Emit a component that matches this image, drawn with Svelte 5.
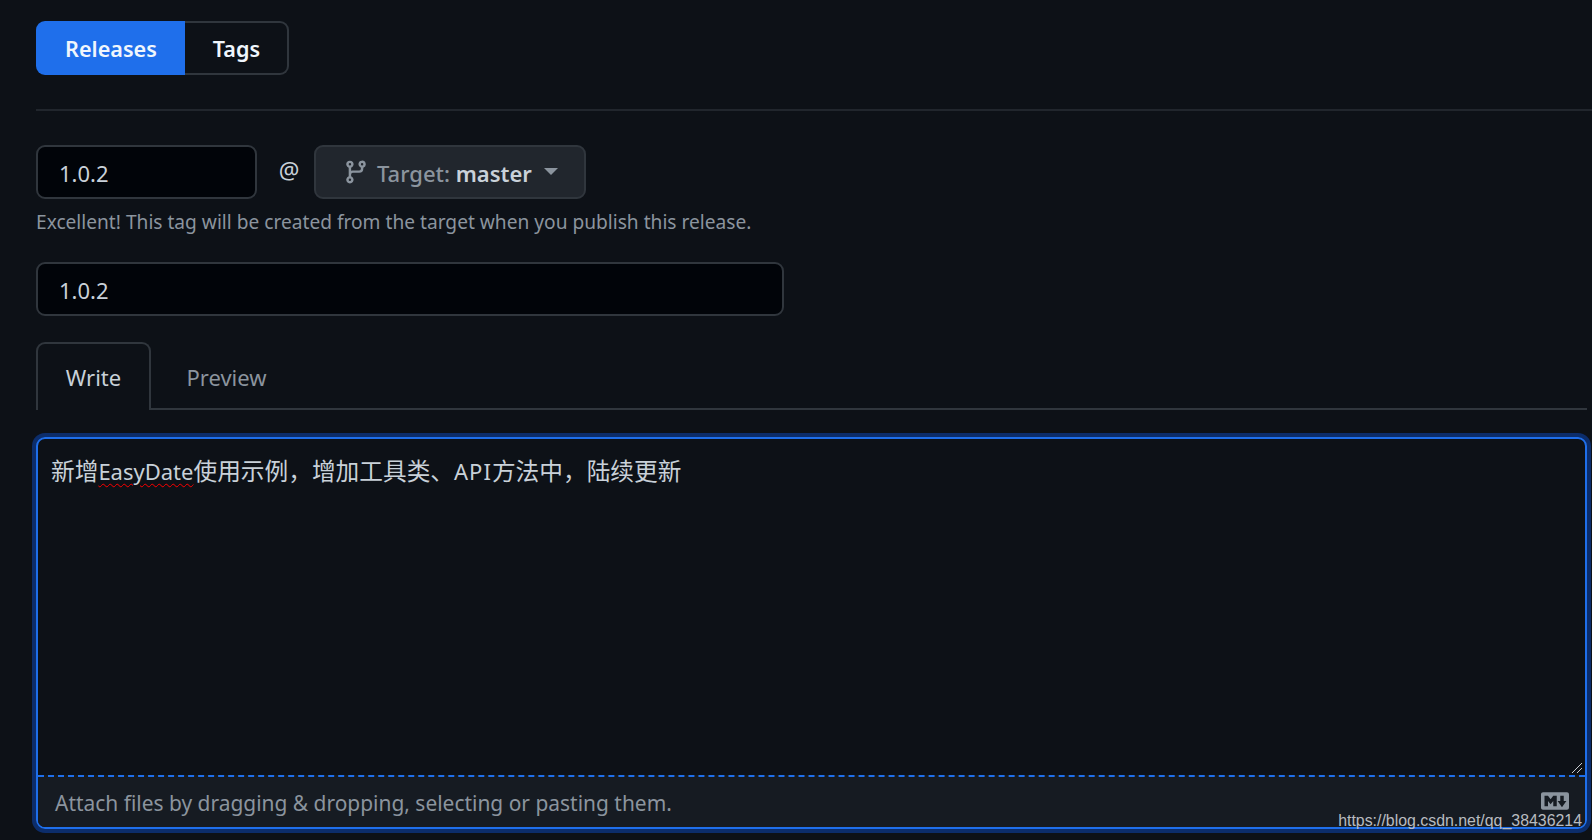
<script>
  let tagName = "1.0.2";
  let title = "1.0.2";
</script>

<div class="page">
  <div class="subnav">
    <a class="subnavItem selected" href="#releases">Releases</a>
    <a class="subnavItem" href="#tags">Tags</a>
  </div>

  <hr />

  <div class="tagRow">
    <input class="field tagField" bind:value={tagName} type="text" />
    <span class="at">@</span>
    <button class="targetBtn">
      <svg class="branch" viewBox="0 0 16 16" width="26" height="26" fill="currentColor">
        <path fill-rule="evenodd" d="M11.75 2.5a.75.75 0 100 1.5.75.75 0 000-1.5zm-2.25.75a2.25 2.25 0 113 2.122V6A2.5 2.5 0 0110 8.5H6a1 1 0 00-1 1v1.128a2.251 2.251 0 11-1.5 0V5.372a2.25 2.25 0 111.5 0v1.836A2.492 2.492 0 016 7h4a1 1 0 001-1v-.628A2.25 2.25 0 019.5 3.25zM4.25 12a.75.75 0 100 1.5.75.75 0 000-1.5zM3.5 3.25a.75.75 0 111.5 0 .75.75 0 01-1.5 0z"></path>
      </svg>
      <span class="targetLabel">Target: <b>master</b></span>
      <span class="caret"></span>
    </button>
  </div>
  <p class="note">Excellent! This tag will be created from the target when you publish this release.</p>

  <input class="field titleField" bind:value={title} type="text" />

  <div class="tabs">
    <div class="tab active">Write</div>
    <div class="tab">Preview</div>
  </div>

  <div class="editor">
    <div class="body">
      新增<span class="latin misspelled">EasyDate</span>使用示例，增加工具类、<span class="latin api">API</span>方法中，陆续更新
      <svg class="grip" viewBox="0 0 12 12" width="12" height="12">
        <path d="M11 1 1 11M11 6 6 11" stroke="#c8ccd0" stroke-width="1" fill="none"></path>
      </svg>
    </div>
    <div class="attach">
      <span>Attach files by dragging &amp; dropping, selecting or pasting them.</span>
      <svg class="md" viewBox="0 0 16 16" width="28" height="28" fill="currentColor">
        <path fill-rule="evenodd" d="M14.85 3H1.15C.52 3 0 3.52 0 4.15v7.69C0 12.48.52 13 1.15 13h13.69c.64 0 1.15-.52 1.15-1.15v-7.7C16 3.52 15.48 3 14.85 3zM9 11H7V8L5.5 9.92 4 8v3H2V5h2l1.5 2L7 5h2v6zm2.99.5L9.5 8H11V5h2v3h1.5l-2.51 3.5z"></path>
      </svg>
    </div>
  </div>

  <div class="watermark">https://blog.csdn.net/qq_38436214</div>
</div>

<style>
  :global(body) {
    background: #0d1117;
    overflow: hidden;
  }

  .page {
    position: relative;
    height: 840px;
    box-sizing: border-box;
    padding: 21px 5px 0 36px;
    font-family: "Noto Sans", "Noto Sans CJK SC", sans-serif;
    color: #c9d1d9;
    font-size: 22px;
  }

  .subnav {
    display: flex;
    height: 54px;
  }
  .subnavItem {
    display: flex;
    align-items: center;
    justify-content: center;
    box-sizing: border-box;
    width: 104px;
    padding: 1px 0 0 1px;
    border: 2px solid #30363d;
    border-left: none;
    border-radius: 0 9px 9px 0;
    color: #f0f6fc;
    font-weight: 600;
    font-size: 21.6px;
    text-decoration: none;
  }
  .subnavItem.selected {
    width: 149px;
    background: #1f6feb;
    border: none;
    border-radius: 9px 0 0 9px;
    color: #f0f6fc;
  }

  hr {
    height: 2px;
    background: #21262d;
    border: none;
    margin: 34px -5px 0 0;
  }

  .tagRow {
    display: flex;
    align-items: center;
    margin-top: 34px;
  }
  .field {
    box-sizing: border-box;
    height: 54px;
    padding: 2px 21px 0;
    background: #010409;
    border: 2px solid #30363d;
    border-radius: 9px;
    color: #c9d1d9;
    font: inherit;
    outline: none;
  }
  .tagField {
    width: 221px;
  }
  .at {
    box-sizing: border-box;
    width: 57px;
    padding-left: 7px;
    text-align: center;
    margin-top: -4px;
    font-size: 23px;
  }
  .targetBtn {
    display: flex;
    align-items: center;
    box-sizing: border-box;
    width: 272px;
    height: 54px;
    padding: 2px 0 0 27px;
    background: #21262d;
    border: 2px solid #30363d;
    border-radius: 9px;
    color: #8b949e;
    font: inherit;
    font-weight: 500;
  }
  .branch {
    flex: none;
    margin-top: -2px;
  }
  .targetLabel {
    margin-left: 8px;
  }
  .targetLabel b {
    color: #c9d1d9;
    font-weight: 600;
  }
  .caret {
    margin-left: 12px;
    margin-top: -4px;
    border: 7px solid transparent;
    border-top-color: #8b949e;
    border-bottom: none;
  }

  .note {
    margin: 10px 0 0;
    font-size: 19.15px;
    line-height: 26px;
    color: #8b949e;
  }

  .titleField {
    display: block;
    width: 748px;
    margin-top: 27px;
  }

  .tabs {
    display: flex;
    height: 66px;
    margin-top: 26px;
    border-bottom: 2px solid #30363d;
  }
  .tab {
    display: flex;
    align-items: center;
    justify-content: center;
    box-sizing: border-box;
    width: 115px;
    height: 68px;
    padding-top: 1px;
    color: #8b949e;
    margin-left: 18px;
  }
  .tab.active {
    margin-left: 0;
    padding-top: 0;
    background: #0d1117;
    border: 2px solid #30363d;
    border-bottom: none;
    border-radius: 9px 9px 0 0;
    color: #c9d1d9;
  }

  .editor {
    display: flex;
    flex-direction: column;
    box-sizing: border-box;
    height: 392px;
    margin-top: 27px;
    border: 2px solid #1f6feb;
    border-radius: 9px;
    box-shadow: 0 0 0 4px #0c2d6b;
    overflow: hidden;
  }
  .body {
    position: relative;
    flex: 1;
    padding: 17px 13px;
    font-size: 23.7px;
    line-height: 30px;
  }
  .latin {
    font-size: 22px;
  }
  .api {
    letter-spacing: 1px;
  }
  .misspelled {
    text-decoration: underline wavy #ff0000 1px;
    text-underline-offset: 3px;
  }
  .grip {
    position: absolute;
    right: 2px;
    bottom: 1px;
  }
  .attach {
    display: flex;
    align-items: center;
    justify-content: space-between;
    box-sizing: border-box;
    height: 52px;
    padding: 1px 16px 0 17px;
    background: #161b22;
    border-top: 2px dashed #1f6feb;
    color: #8b949e;
    font-size: 20.95px;
  }
  .md {
    color: #8b949e;
    margin-top: -4px;
  }

  .watermark {
    position: absolute;
    right: 10px;
    top: 811px;
    font-family: "Liberation Sans", sans-serif;
    font-size: 15.9px;
    line-height: 20px;
    color: #b9bcc0;
  }
</style>
